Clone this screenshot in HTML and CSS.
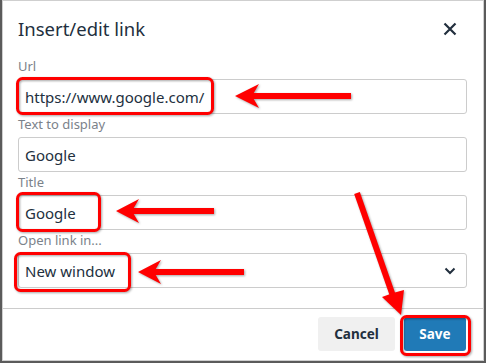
FILE: index.html
```html
<!DOCTYPE html>
<html lang="en">
<head>
  <meta charset="UTF-8" />
  <title>Insert/edit link</title>
  <link rel="stylesheet" href="styles.css">
</head>
<body>
  <div class="frame">
    <div class="dialog">
      <div class="dialog-header">
        <h1>Insert/edit link</h1>
        <button class="close" type="button" aria-label="Close">
          <svg width="14" height="14" viewBox="0 0 14 14">
            <path d="M1.5 1.5 L12.5 12.5 M12.5 1.5 L1.5 12.5" stroke="#222f3e" stroke-width="2.2" fill="none" />
          </svg>
        </button>
      </div>

      <div class="dialog-body">
        <label class="field-label">Url</label>
        <div class="field">https://www.google.com/</div>

        <label class="field-label">Text to display</label>
        <div class="field">Google</div>

        <label class="field-label">Title</label>
        <div class="field">Google</div>

        <label class="field-label">Open link in...</label>
        <div class="field select">
          <span>New window</span>
          <svg width="12" height="8" viewBox="0 0 12 8">
            <path d="M1.5 1.5 L6 6 L10.5 1.5" stroke="#222f3e" stroke-width="2" fill="none" />
          </svg>
        </div>
      </div>

      <div class="dialog-footer">
        <button class="btn btn-cancel" type="button">Cancel</button>
        <button class="btn btn-save" type="button">Save</button>
      </div>
    </div>
  </div>

  <!-- red markup drawn on top of the screenshot -->
  <svg class="marks" width="486" height="363" viewBox="0 0 486 363">
    <g fill="none" stroke="#f00" stroke-width="3">
      <rect x="17.5" y="78.5" width="195" height="35" rx="5" />
      <rect x="17.5" y="193.5" width="82" height="37" rx="5" />
      <rect x="15.5" y="253.5" width="114" height="37" rx="5" />
      <rect x="401.5" y="316.5" width="68" height="38" rx="5" />
    </g>
    <g stroke="#f00" stroke-width="6">
      <line x1="250" y1="96" x2="351" y2="96" />
      <line x1="130" y1="211" x2="214" y2="211" />
      <line x1="152" y1="272" x2="244" y2="272" />
      <line x1="357" y1="193" x2="393" y2="296" />
    </g>
    <g fill="#f00">
      <polygon points="235,96 259,84 252,96 259,108" />
      <polygon points="116,211 139,199 132,211 139,223" />
      <polygon points="138,272 161,260 154,272 161,284" />
      <polygon points="401,315 382,297 393,293 404,290" />
    </g>
  </svg>
</body>
</html>
```

FILE: styles.css
```css
body {
  margin: 0;
  background: #fff;
  font-family: "Noto Sans", "Open Sans", sans-serif;
  color: #222f3e;
}

.frame {
  position: relative;
  width: 486px;
  height: 363px;
  box-sizing: border-box;
  border: 2px solid #5b5b5b;
  border-top: 0;
}

.dialog {
  height: 100%;
  box-sizing: border-box;
  border: 1px solid #cfcfcf;
  display: flex;
  flex-direction: column;
}

.dialog-header {
  height: 55px;
  display: flex;
  align-items: center;
  justify-content: space-between;
  padding: 0 26px 0 15px;
}

.dialog-header h1 {
  margin: 0;
  font-size: 18.5px;
  font-weight: 400;
  color: #222f3e;
}

.close {
  border: 0;
  background: none;
  padding: 0;
  display: flex;
}

.dialog-body {
  padding: 0 16px 20px 15px;
  display: flex;
  flex-direction: column;
}

.field-label {
  height: 23px;
  line-height: 21px;
  font-size: 13px;
  color: #7b828a;
}

.field {
  height: 35px;
  box-sizing: border-box;
  border: 1px solid #cccccc;
  border-radius: 3px;
  padding: 0 6px;
  display: flex;
  align-items: center;
  font-size: 15px;
  color: #222f3e;
}

.select {
  justify-content: space-between;
  padding-right: 10px;
}

.dialog-footer {
  flex: 1;
  border-top: 1px solid #cccccc;
  display: flex;
  justify-content: flex-end;
  align-items: flex-start;
  gap: 9px;
  padding: 8px 17px 0 0;
}

.btn {
  height: 34px;
  border: 0;
  border-radius: 3px;
  font-family: "Noto Sans", "Open Sans", sans-serif;
  font-size: 13.5px;
  font-weight: 700;
  cursor: pointer;
}

.btn-cancel {
  width: 77px;
  background: #f0f0f0;
  color: #222f3e;
}

.btn-save {
  width: 62px;
  background: #207ab7;
  color: #fff;
}

.marks {
  position: absolute;
  top: 0;
  left: 0;
  filter: drop-shadow(1px 1px 1px rgba(0, 0, 0, 0.35));
}
```
